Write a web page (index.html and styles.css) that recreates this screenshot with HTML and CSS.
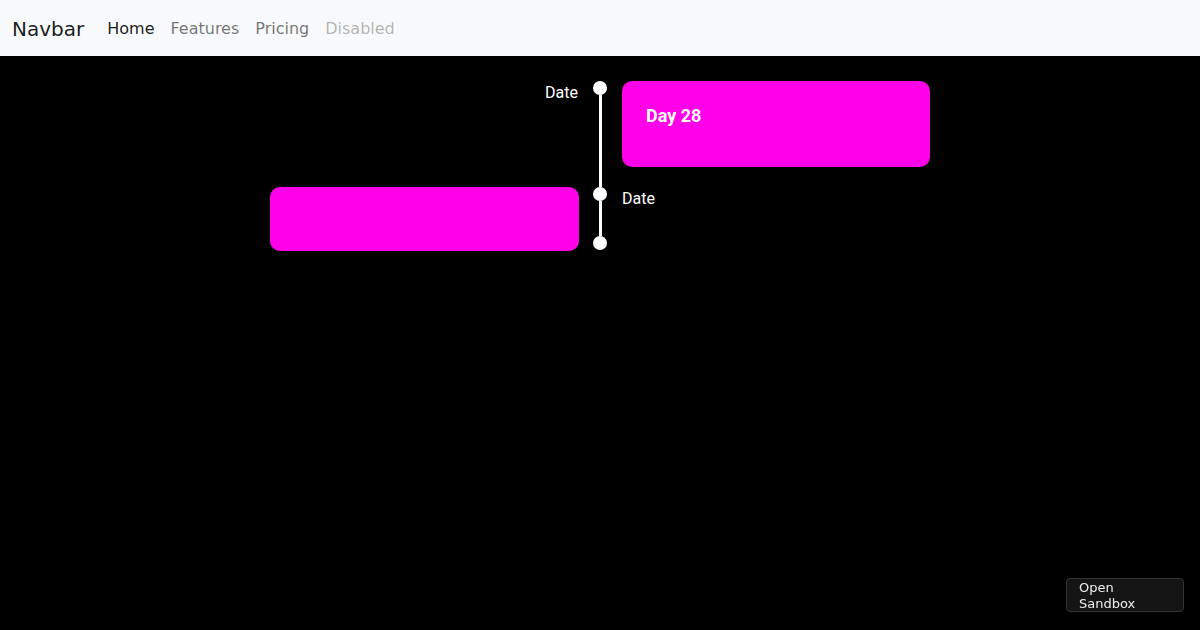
FILE: index.html
```html
<!DOCTYPE html>
<html lang="en">
<head>
<meta charset="utf-8">
<title>Timeline</title>
<link rel="stylesheet" href="styles.css">
</head>
<body>
<nav class="navbar">
  <a class="brand" href="#">Navbar</a>
  <ul class="nav">
    <li><a class="nav-link active" href="#">Home</a></li>
    <li><a class="nav-link" href="#">Features</a></li>
    <li><a class="nav-link" href="#">Pricing</a></li>
    <li><a class="nav-link disabled" href="#">Disabled</a></li>
  </ul>
</nav>
<main class="stage">
  <div class="timeline">
    <div class="row row-first">
      <div class="side left"><span class="date">Date</span></div>
      <div class="axis"><span class="dot"></span><span class="line"></span></div>
      <div class="side right"><div class="card card-tall"><h3 class="card-title">Day 28</h3></div></div>
    </div>
    <div class="row row-last">
      <div class="side left"><div class="card card-short"></div></div>
      <div class="axis"><span class="dot"></span><span class="line"></span><span class="dot"></span></div>
      <div class="side right"><span class="date">Date</span></div>
    </div>
  </div>
</main>
<button class="sandbox">Open Sandbox</button>
</body>
</html>
```

FILE: styles.css
```css
* { box-sizing: border-box; }
html, body { margin: 0; padding: 0; }
body {
  background: #000;
  width: 1200px;
  height: 630px;
  overflow: hidden;
  font-family: "DejaVu Sans", sans-serif;
}
.navbar {
  height: 56px;
  background: #f8f9fa;
  display: flex;
  align-items: center;
  padding: 1px 12px 0;
}
.brand {
  font-size: 20px;
  color: rgba(0,0,0,0.9);
  text-decoration: none;
  margin-right: 15px;
  line-height: 30px;
}
.nav {
  display: flex;
  list-style: none;
  margin: 0;
  padding: 0;
}
.nav-link {
  display: block;
  padding: 8px;
  font-size: 16px;
  line-height: 24px;
  color: rgba(0,0,0,0.55);
  text-decoration: none;
}
.nav-link.active { color: rgba(0,0,0,0.9); }
.nav-link.disabled { color: rgba(0,0,0,0.3); }

.stage {
  padding-top: 25px;
  font-family: Roboto, "Liberation Sans", sans-serif;
  color: #fff;
}
.timeline {
  width: 660px;
  margin: 0 auto;
}
.row {
  display: grid;
  grid-template-columns: 309px 42px 309px;
}
.row-first { height: 106px; }
.row-last { height: 70px; }
.side.left { display: flex; justify-content: flex-end; align-items: flex-start; }
.side.right { display: flex; justify-content: flex-start; align-items: flex-start; }
.date {
  font-size: 16px;
  line-height: 24px;
  font-weight: 400;
}
.side.left .date { margin-right: 1px; }
.side.right .date { margin-left: 1px; }
.axis {
  display: flex;
  flex-direction: column;
  align-items: center;
}
.row-last .axis { height: 63px; }
.dot {
  width: 14px;
  height: 14px;
  border-radius: 50%;
  background: #fff;
  flex: none;
}
.line {
  width: 3px;
  background: #fff;
  flex: 1;
}
.card {
  background: #ff00e8;
  border-radius: 10px;
  width: 100%;
}
.side.right .card { margin-left: 1px; width: 308px; }
.card-tall { height: 86px; padding: 24px; }
.card-short { height: 64px; }
.card-title {
  margin: 0;
  font-size: 18px;
  font-weight: 700;
  line-height: 22px;
}
.sandbox {
  position: fixed;
  right: 16px;
  bottom: 18px;
  width: 118px;
  height: 34px;
  padding: 1px 0 0 12px;
  background: #151515;
  border: 1px solid #333;
  border-radius: 4px;
  color: #eee;
  font-family: "DejaVu Sans", sans-serif;
  font-size: 13px;
  line-height: 16px;
  text-align: left;
  word-spacing: 60px;
}
```
